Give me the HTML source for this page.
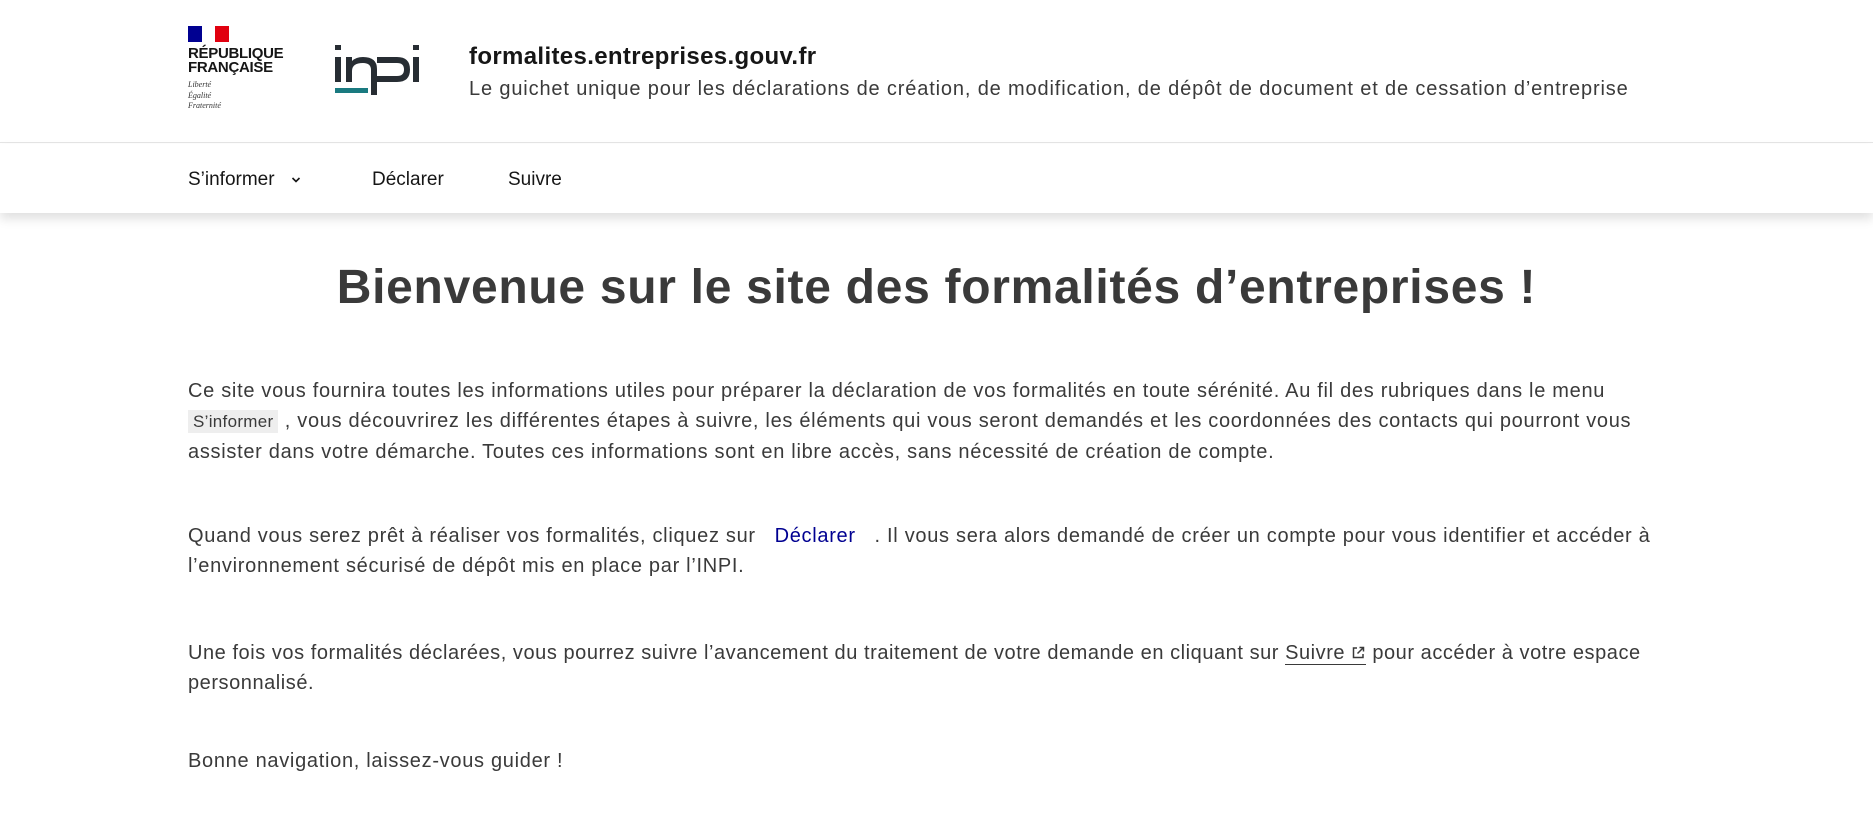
<!DOCTYPE html>
<html><head><meta charset="utf-8">
<style>
*{margin:0;padding:0;box-sizing:border-box}
body{width:1873px;height:827px;overflow:hidden;background:#fff;font-family:"Liberation Sans",sans-serif;color:#3a3a3a}
.hdr{position:absolute;left:0;top:0;width:1873px;height:143px;border-bottom:1px solid #e5e5e5}
.flag{position:absolute;left:188px;top:26px;width:41px;height:16px;display:flex}
.flag div{flex:1}
.rf{position:absolute;left:188px;top:47px;font-weight:bold;font-size:15px;line-height:14px;color:#161616;letter-spacing:-0.3px}
.dev{position:absolute;left:188px;top:80px;font-family:"Liberation Serif",serif;font-style:italic;font-size:8px;line-height:10.5px;color:#333}
.t1{position:absolute;left:469px;top:43px;font-size:24px;font-weight:bold;color:#161616;letter-spacing:0.35px}
.t2{position:absolute;left:469px;top:78px;font-size:20px;color:#3a3a3a;letter-spacing:0.85px}
.nav{position:absolute;left:0;top:144px;width:1873px;height:69px;box-shadow:0 6px 10px rgba(0,0,0,0.12);background:#fff}
.nav span{position:absolute;top:25px;font-size:19px;color:#161616}
h1{position:absolute;left:0;width:1873px;top:260px;text-align:center;font-size:48px;font-weight:bold;color:#3a3a3a;letter-spacing:0.7px}
p{position:absolute;left:188px;font-size:20px;line-height:30px;color:#3a3a3a;white-space:nowrap;letter-spacing:0.7px}
.code{background:#eee;padding:2px 5px;font-size:17px;letter-spacing:0.3px}
</style></head><body>
<div class="hdr">
<div class="flag"><div style="background:#000091"></div><div style="background:#fff"></div><div style="background:#e1000f"></div></div>
<div class="rf">RÉPUBLIQUE<br>FRANÇAISE</div>
<div class="dev">Liberté<br>Égalité<br>Fraternité</div>
<svg style="position:absolute;left:330px;top:40px" width="100" height="60" viewBox="0 0 100 60">
<g fill="#272d33">
<rect x="5" y="5" width="6" height="5"/><rect x="5" y="17" width="6" height="25"/>
<path d="M16 42V17h6v4q4-4 11-4q14 0 14 12v26h-6V30q0-7-8-7q-11 0-11 8v11z"/>
<path d="M47 17h20q13 0 13 12.5q0 12.5-13 12.5h-20v-6h20q7 0 7-6.5q0-6.5-7-6.5h-20z"/>
<rect x="83" y="5" width="6" height="5"/><rect x="83" y="17" width="6" height="25"/>
</g>
<rect x="5" y="48" width="33" height="5" fill="#1a7a80"/>
</svg>
<div class="t1">formalites.entreprises.gouv.fr</div>
<div class="t2">Le guichet unique pour les déclarations de création, de modification, de dépôt de document et de cessation d’entreprise</div>
</div>
<div class="nav">
<span style="left:188px">S’informer</span>
<svg style="position:absolute;left:291px;top:32px" width="10" height="8" viewBox="0 0 10 8"><path d="M1.5 2l3.5 3.5L8.5 2" stroke="#161616" stroke-width="1.6" fill="none"/></svg>
<span style="left:372px">Déclarer</span>
<span style="left:508px">Suivre</span>
</div>
<h1>Bienvenue sur le site des formalités d’entreprises !</h1>
<p style="top:376px">Ce site vous fournira toutes les informations utiles pour préparer la déclaration de vos formalités en toute sérénité. Au fil des rubriques dans le menu<br><span class="code">S’informer</span> , vous découvrirez les différentes étapes à suivre, les éléments qui vous seront demandés et les coordonnées des contacts qui pourront vous<br>assister dans votre démarche. Toutes ces informations sont en libre accès, sans nécessité de création de compte.</p>
<p style="top:521px">Quand vous serez prêt à réaliser vos formalités, cliquez sur &nbsp;&nbsp;<span style="color:#000091">Déclarer</span>&nbsp;&nbsp; . Il vous sera alors demandé de créer un compte pour vous identifier et accéder à<br>l’environnement sécurisé de dépôt mis en place par l’INPI.</p>
<p style="top:638px;letter-spacing:0.55px">Une fois vos formalités déclarées, vous pourrez suivre l’avancement du traitement de votre demande en cliquant sur <span style="border-bottom:1px solid #3a3a3a">Suivre <svg width="15" height="15" viewBox="0 0 15 15" style="vertical-align:-1px"><path d="M6 3H2.5v9.5H12V9M8.5 2.5h4v4M12.5 2.5L6.5 8.5" stroke="#3a3a3a" stroke-width="1.5" fill="none"/></svg></span> pour accéder à votre espace<br>personnalisé.</p>
<p style="top:746px">Bonne navigation, laissez-vous guider !</p>
</body></html>
